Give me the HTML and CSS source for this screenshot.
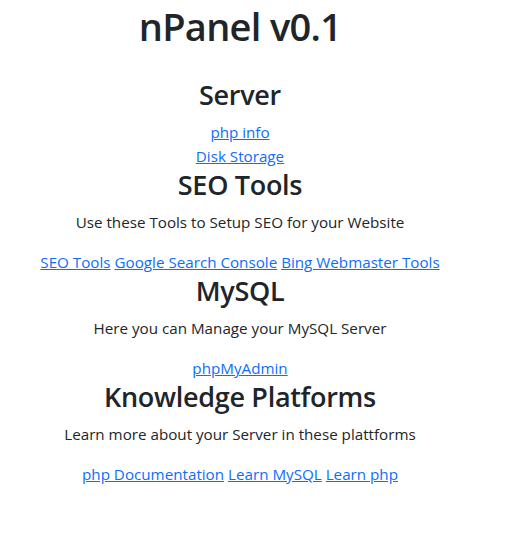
FILE: index.html
```html
<!DOCTYPE html>
<html lang="en">
<head>
<meta charset="utf-8">
<title>nPanel v0.1</title>
<link rel="stylesheet" href="styles.css">
</head>
<body>
<div class="page">
  <h1 class="title">nPanel v0.1</h1>
  <h2 class="section">Server</h2>
  <div class="stack">
    <a href="#">php info</a>
    <a href="#">Disk Storage</a>
  </div>
  <h2 class="section">SEO Tools</h2>
  <p class="lead">Use these Tools to Setup SEO for your Website</p>
  <div class="links"><a href="#">SEO Tools</a> <a href="#">Google Search Console</a> <a href="#">Bing Webmaster Tools</a></div>
  <h2 class="section">MySQL</h2>
  <p class="lead">Here you can Manage your MySQL Server</p>
  <div class="links"><a href="#">phpMyAdmin</a></div>
  <h2 class="section">Knowledge Platforms</h2>
  <p class="lead">Learn more about your Server in these plattforms</p>
  <div class="links"><a href="#">php Documentation</a> <a href="#">Learn MySQL</a> <a href="#">Learn php</a></div>
</div>
</body>
</html>
```
FILE: styles.css
```css
html, body {
  margin: 0;
  padding: 0;
  background: #fff;
}
body {
  font-family: "Open Sans", "Noto Sans", sans-serif;
  font-size: 15.2px;
  line-height: 24px;
  color: #212529;
}
.page {
  width: 480px;
  text-align: center;
}
.title {
  margin: 0 0 26px;
  font-size: 38px;
  font-weight: 600;
  letter-spacing: -0.7px;
  line-height: 52px;
}
.section {
  margin: 0 0 8px;
  font-size: 27px;
  font-weight: 600;
  letter-spacing: -0.3px;
  line-height: 34px;
}
.stack {
  display: flex;
  flex-direction: column;
  align-items: center;
}
.lead {
  margin: 0 0 16px;
}
a {
  color: #0d6efd;
  text-decoration: underline;
}
```
